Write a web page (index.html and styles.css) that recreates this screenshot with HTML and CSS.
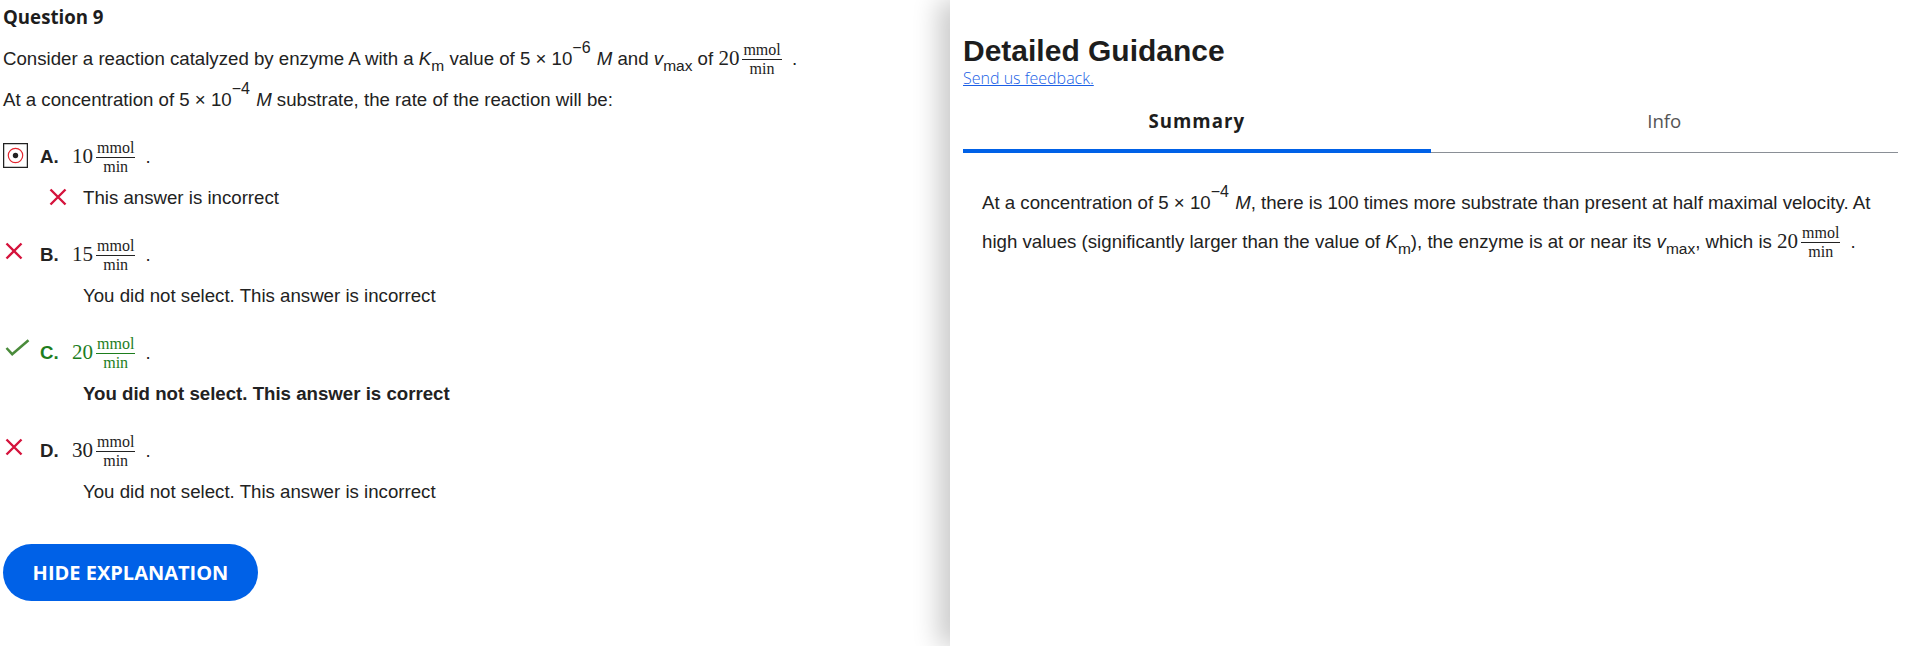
FILE: index.html
```html
<!DOCTYPE html>
<html lang="en">
<head>
<meta charset="utf-8">
<title>Question 9</title>
<link rel="stylesheet" href="styles.css">
</head>
<body>
<div class="page">
  <main class="quiz">
    <h2 class="q-title">Question 9</h2>
    <p class="stem">Consider a reaction catalyzed by enzyme A with a <i>K</i><sub>m</sub> value of 5 × 10<sup>−6</sup> <i>M</i> and <i>v</i><sub>max</sub> of <span class="mnum">20</span><span class="frac"><span class="fn">mmol</span><span class="fd">min</span></span> .</p>
    <p class="stem">At a concentration of 5 × 10<sup>−4</sup> <i>M</i> substrate, the rate of the reaction will be:</p>

    <div class="options">
      <div class="option">
        <span class="mark"><svg class="radio" width="25" height="25" viewBox="0 0 25 25"><rect x="0.6" y="0.6" width="23.8" height="23.8" fill="none" stroke="#222" stroke-width="1.3"/><circle cx="12.5" cy="12.5" r="7.2" fill="none" stroke="#e3262f" stroke-width="1.2"/><circle cx="12.5" cy="12.5" r="2.7" fill="#222"/></svg></span><span class="letter">A.</span><span class="mnum">10</span><span class="frac"><span class="fn">mmol</span><span class="fd">min</span></span> .
      </div>
      <div class="feedback with-icon">
        <span class="ficon"><svg class="xicon" width="18" height="18" viewBox="0 0 18 18"><path d="M1.5 1.5L16.5 16.5M16.5 1.5L1.5 16.5" stroke="#d5133c" stroke-width="2.4" fill="none"/></svg></span>This answer is incorrect
      </div>

      <div class="option">
        <span class="mark"><svg class="xicon" width="18" height="18" viewBox="0 0 18 18"><path d="M1.5 1.5L16.5 16.5M16.5 1.5L1.5 16.5" stroke="#d5133c" stroke-width="2.4" fill="none"/></svg></span><span class="letter">B.</span><span class="mnum">15</span><span class="frac"><span class="fn">mmol</span><span class="fd">min</span></span> .
      </div>
      <div class="feedback">You did not select. This answer is incorrect</div>

      <div class="option correct">
        <span class="mark"><svg class="check" width="25" height="18" viewBox="0 0 25 18"><path d="M1.5 9L7.2 15.2L23.5 1.2" stroke="#4a8b3b" stroke-width="2.5" fill="none"/></svg></span><span class="letter">C.</span><span class="mnum">20</span><span class="frac"><span class="fn">mmol</span><span class="fd">min</span></span><span class="dot"> .</span>
      </div>
      <div class="feedback strong">You did not select. This answer is correct</div>

      <div class="option">
        <span class="mark"><svg class="xicon" width="18" height="18" viewBox="0 0 18 18"><path d="M1.5 1.5L16.5 16.5M16.5 1.5L1.5 16.5" stroke="#d5133c" stroke-width="2.4" fill="none"/></svg></span><span class="letter">D.</span><span class="mnum">30</span><span class="frac"><span class="fn">mmol</span><span class="fd">min</span></span> .
      </div>
      <div class="feedback">You did not select. This answer is incorrect</div>
    </div>

    <button class="btn-explain" type="button">HIDE EXPLANATION</button>
  </main>

  <aside class="guide">
    <h1 class="guide-title">Detailed Guidance</h1>
    <a class="feedback-link" href="#">Send us feedback.</a>
    <div class="tabs">
      <div class="tab active">Summary</div>
      <div class="tab">Info</div>
    </div>
    <p class="summary">At a concentration of 5 × 10<sup>−4</sup> <i>M</i>, there is 100 times more substrate than present at half maximal velocity. At high values (significantly larger than the value of <i>K</i><sub>m</sub>), the enzyme is at or near its <i>v</i><sub>max</sub>, which is <span class="mnum">20</span><span class="frac"><span class="fn">mmol</span><span class="fd">min</span></span> .</p>
  </aside>
</div>
</body>
</html>
```

FILE: styles.css
```css
* { box-sizing: border-box; }

html, body {
  margin: 0;
  padding: 0;
  background: #fff;
}

body {
  font-family: "Liberation Sans", Arial, sans-serif;
  font-size: 18.67px;
  color: #222;
}

.page {
  display: flex;
  height: 646px;
  overflow: hidden;
}

.quiz {
  width: 950px;
  flex: none;
  padding: 0 0 0 3px;
}

.q-title {
  font-family: "Open Sans", sans-serif;
  font-weight: 700;
  font-size: 18.67px;
  line-height: 25px;
  margin: 4px 0 9px;
  color: #1d1d1d;
}

.stem {
  margin: 0;
  line-height: 41px;
  white-space: nowrap;
}

i {
  font-style: italic;
}

sub {
  font-size: 15.5px;
  line-height: 1;
  vertical-align: -6px;
}

sup {
  font-size: 16px;
  line-height: 1;
  vertical-align: 12px;
  margin-right: 1px;
}

.mnum {
  font-family: "Liberation Serif", "Times New Roman", serif;
  font-size: 21px;
}

.frac {
  display: inline-flex;
  flex-direction: column;
  align-items: center;
  vertical-align: 10px;
  font-family: "Liberation Serif", "Times New Roman", serif;
  font-size: 16px;
  line-height: 1;
  margin: 0 5px 0 3px;
}

.fn {
  border-bottom: 1px solid currentColor;
  padding: 0 1px 1px;
}

.fd {
  padding-top: 1px;
}

.options {
  margin-top: 15px;
}

.option {
  height: 42px;
  line-height: 42px;
  white-space: nowrap;
}

.option + .feedback {
  margin-bottom: 14px;
}

.mark {
  display: inline-block;
  width: 37px;
}

.radio {
  vertical-align: -5px;
}

.xicon {
  vertical-align: 1px;
  margin-left: 2px;
}

.check {
  vertical-align: 2px;
  margin-left: 2px;
}

.letter {
  display: inline-block;
  width: 32px;
  font-weight: 700;
}

.correct {
  color: #1d7d1d;
}

.correct .dot {
  color: #222;
}

.feedback {
  line-height: 42px;
  height: 42px;
  padding-left: 80px;
  white-space: nowrap;
}

.feedback.with-icon {
  padding-left: 46px;
}

.ficon {
  display: inline-block;
  width: 34px;
}

.ficon .xicon {
  margin-left: 0;
  vertical-align: -2px;
}

.feedback.strong {
  font-weight: 700;
}

.btn-explain {
  display: block;
  margin-top: 31px;
  width: 255px;
  height: 57px;
  border: none;
  border-radius: 29px;
  background: #0061e7;
  color: #fff;
  font-family: "Open Sans", sans-serif;
  font-weight: 700;
  font-size: 20px;
  padding: 0;
}

.guide {
  flex: 1;
  padding: 0 9px 0 13px;
  background: #fff;
  box-shadow: -12px 0 24px rgba(0, 0, 0, 0.2);
}

.guide-title {
  font-family: "Liberation Sans", Arial, sans-serif;
  font-weight: 700;
  font-size: 30px;
  line-height: 33px;
  margin: 34px 0 0;
  color: #1d1d1d;
}

.feedback-link {
  display: inline-block;
  font-family: "Open Sans", sans-serif;
  font-weight: 300;
  font-size: 16px;
  line-height: 22px;
  color: #1a5fe6;
  text-decoration: underline;
}

.tabs {
  display: flex;
  border-bottom: 1px solid #8a8f96;
}

.tab {
  flex: 1;
  text-align: center;
  font-family: "Open Sans", sans-serif;
  font-size: 18.67px;
  line-height: 25px;
  padding: 19px 0 16px;
  color: #555;
  border-bottom: 4px solid transparent;
  margin-bottom: -1px;
}

.tab.active {
  font-weight: 700;
  color: #1d1d1d;
  letter-spacing: 1px;
  border-bottom-color: #0061e7;
}

.summary {
  margin: 31px 0 0;
  padding: 0 19px;
  line-height: 38px;
}
```
